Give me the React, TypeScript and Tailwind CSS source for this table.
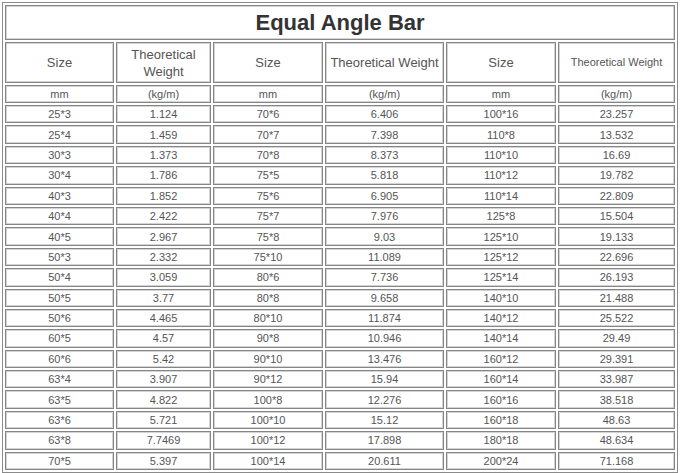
const rows: [string, string, string, string, string, string][] = [
  ["25*3", "1.124", "70*6", "6.406", "100*16", "23.257"],
  ["25*4", "1.459", "70*7", "7.398", "110*8", "13.532"],
  ["30*3", "1.373", "70*8", "8.373", "110*10", "16.69"],
  ["30*4", "1.786", "75*5", "5.818", "110*12", "19.782"],
  ["40*3", "1.852", "75*6", "6.905", "110*14", "22.809"],
  ["40*4", "2.422", "75*7", "7.976", "125*8", "15.504"],
  ["40*5", "2.967", "75*8", "9.03", "125*10", "19.133"],
  ["50*3", "2.332", "75*10", "11.089", "125*12", "22.696"],
  ["50*4", "3.059", "80*6", "7.736", "125*14", "26.193"],
  ["50*5", "3.77", "80*8", "9.658", "140*10", "21.488"],
  ["50*6", "4.465", "80*10", "11.874", "140*12", "25.522"],
  ["60*5", "4.57", "90*8", "10.946", "140*14", "29.49"],
  ["60*6", "5.42", "90*10", "13.476", "160*12", "29.391"],
  ["63*4", "3.907", "90*12", "15.94", "160*14", "33.987"],
  ["63*5", "4.822", "100*8", "12.276", "160*16", "38.518"],
  ["63*6", "5.721", "100*10", "15.12", "160*18", "48.63"],
  ["63*8", "7.7469", "100*12", "17.898", "180*18", "48.634"],
  ["70*5", "5.397", "100*14", "20.611", "200*24", "71.168"],
];

const cell =
  "border border-[#858585] shadow-[inset_0_0_0_1px_#d4d4d4] p-0 text-center align-middle";

export default function App() {
  return (
    <div className="min-h-screen bg-white pt-[2px] pl-[2px] font-['Liberation_Sans',Arial,sans-serif] text-[#555]">
      <table className="w-[676px] table-fixed border-separate border-spacing-[2px] border border-[#8a8a8a]">
        <colgroup>
          <col className="w-[109px]" />
          <col className="w-[95px]" />
          <col className="w-[110px]" />
          <col className="w-[119px]" />
          <col className="w-[110px]" />
          <col className="w-[117px]" />
        </colgroup>
        <tbody>
          <tr>
            <td
              colSpan={6}
              className={`${cell} h-[35px] text-[22px] leading-[26px] font-bold text-[#333]`}
            >
              Equal Angle Bar
            </td>
          </tr>
          <tr className="text-[13px] leading-[17px]">
            <td className={`${cell} h-[41px]`}>Size</td>
            <td className={`${cell} h-[41px] px-2`}>Theoretical Weight</td>
            <td className={`${cell} h-[41px]`}>Size</td>
            <td className={`${cell} h-[41px]`}>Theoretical Weight</td>
            <td className={`${cell} h-[41px]`}>Size</td>
            <td className={`${cell} h-[41px] text-[11px]`}>Theoretical Weight</td>
          </tr>
          <tr className="text-[11px] leading-[14px]">
            <td className={`${cell} h-[18px]`}>mm</td>
            <td className={`${cell} h-[18px]`}>(kg/m)</td>
            <td className={`${cell} h-[18px]`}>mm</td>
            <td className={`${cell} h-[18px]`}>(kg/m)</td>
            <td className={`${cell} h-[18px]`}>mm</td>
            <td className={`${cell} h-[18px]`}>(kg/m)</td>
          </tr>
          {rows.map((r) => (
            <tr key={r[0]} className="text-[11px] leading-[14px]">
              {r.map((v, i) => (
                <td key={i} className={`${cell} h-[18.4px]`}>
                  {v}
                </td>
              ))}
            </tr>
          ))}
        </tbody>
      </table>
    </div>
  );
}
